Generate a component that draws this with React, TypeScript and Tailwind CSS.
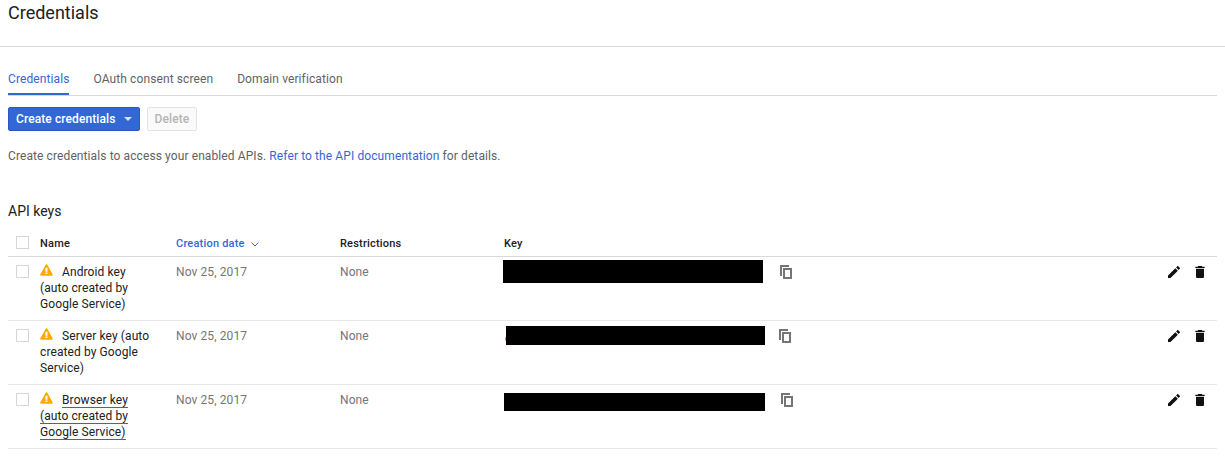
const rows = [
  {
    id: 'android',
    label: 'Android key (auto created by Google Service)',
    linked: false,
    redact: 'ml-[-1px] mt-[3px] h-[23px] w-[260px]',
    copy: 'ml-[17px]',
  },
  {
    id: 'server',
    label: 'Server key (auto created by Google Service)',
    linked: false,
    redact: 'ml-[2px] mt-[5px] h-[19px] w-[259px]',
    copy: 'ml-[14px]',
  },
  {
    id: 'browser',
    label: 'Browser key (auto created by Google Service)',
    linked: true,
    redact: 'mt-[8px] h-[18px] w-[261px]',
    copy: 'ml-[16px]',
  },
];

const tabs = ['Credentials', 'OAuth consent screen', 'Domain verification'];

function Checkbox() {
  return <div className="h-[13px] w-[13px] border border-[#d6d6d6] bg-white" />;
}

function WarningIcon() {
  return (
    <svg width="13" height="12" viewBox="0 0 13 12" className="mr-[9px] inline-block align-[0px]">
      <path d="M6.5 1L1 11h11z" fill="#f9ab00" stroke="#f9ab00" strokeWidth="1.6" strokeLinejoin="round" />
      <path d="M5.5 3.8h2v3.9h-2zM5.5 8.6h2v1.5h-2z" fill="#fff" />
    </svg>
  );
}

function CopyIcon({ className }: { className: string }) {
  return (
    <svg width="12" height="14" viewBox="0 0 12 14" fill="#757575" className={className}>
      <path d="M0 0h9v2H2v9H0z" />
      <path fillRule="evenodd" d="M3 3h9v11H3zM5 5v7h5V5z" />
    </svg>
  );
}

const editPath =
  'M3 17.25V21h3.75L17.81 9.94l-3.75-3.75L3 17.25zM20.71 7.04c.39-.39.39-1.02 0-1.41l-2.34-2.34c-.39-.39-1.02-.39-1.41 0l-1.83 1.83 3.75 3.75 1.83-1.83z';
const deletePath = 'M6 19c0 1.1.9 2 2 2h8c1.1 0 2-.9 2-2V7H6v12zM19 4h-3.5l-1-1h-5l-1 1H5v2h14V4z';

export default function App() {
  return (
    <div className="h-[475px] w-[1225px] overflow-hidden bg-white font-['Roboto',sans-serif] text-xs tracking-[0.1px] text-[#212121]">
      {/* Page title */}
      <div className="h-[47px] border-b border-[#d9d9d9] pl-2 pt-px text-lg leading-6 tracking-normal">Credentials</div>

      <div className="px-2">
        {/* Tabs */}
        <div className="mt-6 flex gap-6 border-b border-[#d9d9d9]">
          {tabs.map((tab, i) => (
            <div
              key={tab}
              className={
                i === 0
                  ? 'border-b-2 border-[#3367d6] pb-[6px] leading-4 text-[#3367d6]'
                  : 'pb-2 leading-4 text-[#5f6368]'
              }
            >
              {tab}
            </div>
          ))}
        </div>

        {/* Actions */}
        <div className="mt-[11px] flex gap-[7px]">
          <button className="flex h-6 w-[132px] items-center rounded-[2px] border border-[#2a56c6] bg-[#3367d6] pl-[7px] font-medium text-white">
            Create credentials
            <span className="ml-2 h-0 w-0 border-x-4 border-t-4 border-x-transparent border-t-white/80" />
          </button>
          <button className="h-6 w-[50px] rounded-[2px] border border-[#e3e3e3] bg-[#fafafa] font-medium text-[#b5b5b5]">
            Delete
          </button>
        </div>

        <p className="mt-[17px] leading-4 text-[#616161]">
          Create credentials to access your enabled APIs.{' '}
          <span className="text-[#3367d6]">Refer to the API documentation</span> for details.
        </p>

        <h2 className="mt-[37px] text-sm leading-5 tracking-normal">API keys</h2>

        {/* Table header */}
        <div className="grid h-9 grid-cols-[32px_136px_164px_164px_1fr] border-b border-[#d9d9d9] pt-[14px] text-[11px] leading-4 font-medium tracking-[0.2px]">
          <div className="pl-2 pt-px">
            <Checkbox />
          </div>
          <div className="pt-px">Name</div>
          <div className="flex h-[18px] items-center text-[#3367d6]">
            Creation date
            <svg width="8" height="5" viewBox="0 0 8 5" fill="none" stroke="currentColor" className="ml-[6px]">
              <path d="M.5.5L4 4 7.5.5" />
            </svg>
          </div>
          <div className="pt-px">Restrictions</div>
          <div className="pt-px">Key</div>
        </div>

        {/* Rows */}
        {rows.map((row) => (
          <div
            key={row.id}
            className="grid h-16 grid-cols-[32px_136px_164px_164px_1fr] border-b border-[#e8e8e8] leading-4"
          >
            <div className="pl-2 pt-2">
              <Checkbox />
            </div>
            <div className="w-[113px] pt-[7px]">
              <WarningIcon />
              {row.linked ? <span className="border-b border-[#5f6368]">{row.label}</span> : row.label}
            </div>
            <div className="pt-[7px] text-[#757575]">Nov 25, 2017</div>
            <div className="pt-[7px] text-[#757575]">None</div>
            <div className="flex items-start">
              <div className={`relative bg-black ${row.redact}`}>
                {row.id === 'server' && <span className="absolute -left-px top-[11px] h-1 w-px bg-[#e0a060]" />}
              </div>
              <CopyIcon className={`mt-2 ${row.copy}`} />
              <div className="ml-auto mr-[9px] mt-[7px] flex gap-[10px] text-[#111]">
                <svg width="16" height="16" viewBox="0 0 24 24" fill="currentColor">
                  <path d={editPath} />
                </svg>
                <svg width="16" height="16" viewBox="0 0 24 24" fill="currentColor">
                  <path d={deletePath} />
                </svg>
              </div>
            </div>
          </div>
        ))}
      </div>
    </div>
  );
}
